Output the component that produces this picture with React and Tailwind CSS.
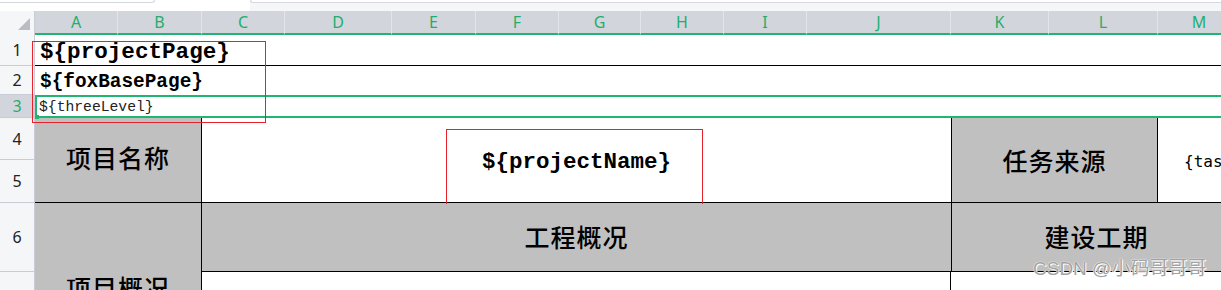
import React from 'react'

const COLS = ['A', 'B', 'C', 'D', 'E', 'F', 'G', 'H', 'I', 'J', 'K', 'L', 'M']
const ROW_HEADS = [
  { n: 1, h: 'row-start-2' },
  { n: 2, h: 'row-start-3' },
  { n: 3, h: 'row-start-4', active: true },
  { n: 4, h: 'row-start-5' },
  { n: 5, h: 'row-start-6' },
  { n: 6, h: 'row-start-7' },
  { n: 7, h: 'row-start-8', blank: true },
]

const mono = { fontFamily: '"Liberation Mono", "DejaVu Sans Mono", monospace' }
const cjk = 'font-["Noto_Sans_CJK_SC",sans-serif]'

function App() {
  return (
    <div className="relative w-[1221px] h-[290px] overflow-hidden bg-white font-['Noto_Sans',sans-serif]">
      {/* ── toolbar remnant ── */}
      <div className="flex h-[11px]">
        <div className="w-[250px] bg-white">
          <div className="w-[155px] h-[3px] border-b border-r border-[#d5d8de] rounded-br-[3px]" />
        </div>
        <div className="flex-1 bg-[#f5f6f8]">
          <div className="h-[3px] bg-white border-b border-l border-[#d5d8de] rounded-bl-[3px]" />
        </div>
      </div>

      {/* ── sheet grid ── */}
      <div className="grid w-[1241px] grid-cols-[35px_83px_84px_83px_107px_84px_83px_82px_83px_83px_144px_98px_109px_83px] grid-rows-[24px_31px_29px_23px_42px_43px_69px_40px]">
        {/* corner */}
        <div className="col-start-1 row-start-1 bg-[#f5f6f8] border-r border-[#c9cdd6] relative">
          <div className="absolute left-[18px] top-[7px] w-0 h-0 border-l-[12px] border-l-transparent border-b-[12px] border-b-[#b9bcc3]" />
        </div>

        {/* column headers */}
        {COLS.map((c) => (
          <div
            key={c}
            className="row-start-1 bg-[#d2d5dc] border-r border-[#e3e5ea] border-b-2 border-b-[#21b473] flex items-center justify-center text-[16px] text-[#1fae6c]"
          >
            {c}
          </div>
        ))}

        {/* row headers */}
        {ROW_HEADS.map(({ n, h, active, blank }) => (
          <div
            key={n}
            className={`col-start-1 ${h} border-r border-b border-[#c7ccd7] flex items-center justify-center text-[16px] ${
              active ? 'bg-[#d2d5dc] text-[#1fae6c]' : 'bg-[#f5f6f8] text-[#222]'
            }`}
          >
            {blank ? '' : n}
          </div>
        ))}

        {/* row 1 */}
        <div className="col-start-2 col-span-13 row-start-2 border-b border-black flex items-center pl-[5px] pt-[5px] whitespace-nowrap">
          <span style={mono} className="text-[22.6px] font-bold leading-none text-black">
            {'${projectPage}'}
          </span>
        </div>

        {/* row 2 */}
        <div className="col-start-2 col-span-13 row-start-3 flex items-center pl-[5px] pt-[4px] whitespace-nowrap">
          <span style={mono} className="text-[19.4px] font-bold leading-none text-black">
            {'${foxBasePage}'}
          </span>
        </div>

        {/* row 3 – selected */}
        <div className="col-start-2 col-span-13 row-start-4 border-y-2 border-l-2 border-[#21b473] flex items-center pl-[2px] pt-[2px] whitespace-nowrap relative">
          <span style={mono} className="text-[14.7px] leading-none text-[#222]">
            {'${threeLevel}'}
          </span>
          <div className="absolute -left-[2px] -bottom-[3px] w-[4px] h-[4px] bg-[#21b473]" />
        </div>

        {/* rows 4-5 */}
        <div className={`col-start-2 col-span-2 row-start-5 row-span-2 bg-[#c0c0c0] border-r border-b border-black flex items-center justify-center pb-[5px] ${cjk} text-[25px] font-medium text-black tracking-[1px]`}>
          项目名称
        </div>
        <div className="col-start-4 col-span-8 row-start-5 row-span-2 bg-white border-b border-black flex items-center justify-center pt-[5px]">
          <span style={mono} className="text-[22.5px] font-bold leading-none text-black">
            {'${projectName}'}
          </span>
        </div>
        <div className={`col-start-12 col-span-2 row-start-5 row-span-2 bg-[#c0c0c0] border-x border-b border-black flex items-center justify-center pt-[2px] ${cjk} text-[25px] font-medium text-black tracking-[1px]`}>
          任务来源
        </div>
        <div className="col-start-14 row-start-5 row-span-2 bg-white border-b border-black flex items-center pl-[26px] pt-[4px] whitespace-nowrap">
          <span className="font-['DejaVu_Sans_Mono',monospace] text-[16px] text-black">{'{taskSource}'}</span>
        </div>

        {/* row 6+ */}
        <div className={`col-start-2 col-span-2 row-start-7 row-span-2 bg-[#c0c0c0] border-r border-black flex justify-center pt-[72px] ${cjk} text-[25px] font-medium text-black leading-none tracking-[1px]`}>
          项目概况
        </div>
        <div className={`col-start-4 col-span-8 row-start-7 bg-[#c0c0c0] border-b border-black flex items-center justify-center ${cjk} text-[25px] font-medium text-black tracking-[1px]`}>
          工程概况
        </div>
        <div className={`col-start-12 col-span-3 row-start-7 bg-[#c0c0c0] border-l border-b border-black flex items-center justify-center ${cjk} text-[25px] font-medium text-black tracking-[1px]`}>
          建设工期
        </div>
        <div className="col-start-4 col-span-8 row-start-8 bg-white border-r border-black" />
        <div className="col-start-12 col-span-3 row-start-8 bg-white" />
      </div>

      {/* ── overlays ── */}
      <div className="absolute left-[32px] top-[41px] w-[234px] h-[82px] border border-[#e8222b] pointer-events-none" />
      <div className="absolute left-[446px] top-[129px] w-[257px] h-[75px] border border-b-0 border-[#e8222b] pointer-events-none" />
      <div
        className="absolute left-[1033px] top-[259px] text-[19px] leading-none text-[#a3a3a3] whitespace-nowrap font-['Liberation_Sans','Noto_Sans_CJK_SC',sans-serif] [text-shadow:0_0_1px_#fff,0_0_1px_#fff,1px_1px_0_#fff]"
      >
        CSDN @小码哥哥哥
      </div>
    </div>
  )
}

export default App
